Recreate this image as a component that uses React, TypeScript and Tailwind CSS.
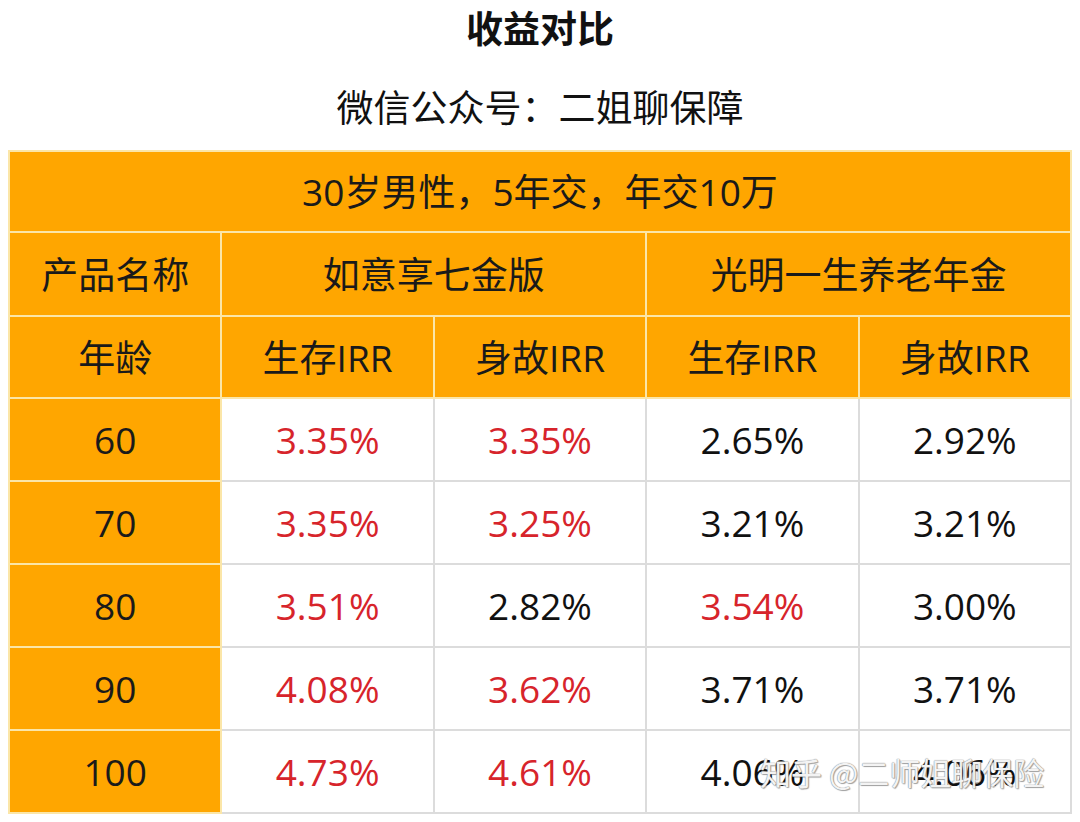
import React from "react";

const font = { fontFamily: '"Open Sans", "Noto Sans CJK SC", sans-serif' };

type Cell = { v: string; red?: boolean };

const rows: { age: string; cells: Cell[] }[] = [
  { age: "60", cells: [{ v: "3.35%", red: true }, { v: "3.35%", red: true }, { v: "2.65%" }, { v: "2.92%" }] },
  { age: "70", cells: [{ v: "3.35%", red: true }, { v: "3.25%", red: true }, { v: "3.21%" }, { v: "3.21%" }] },
  { age: "80", cells: [{ v: "3.51%", red: true }, { v: "2.82%" }, { v: "3.54%", red: true }, { v: "3.00%" }] },
  { age: "90", cells: [{ v: "4.08%", red: true }, { v: "3.62%", red: true }, { v: "3.71%" }, { v: "3.71%" }] },
  { age: "100", cells: [{ v: "4.73%", red: true }, { v: "4.61%", red: true }, { v: "4.06%" }, { v: "4.06%" }] },
];

const hd =
  "flex items-center justify-center bg-[#ffa600] text-[#1a1a1a] border-r-2 border-b-2 border-[#fbe6a8]";

export default function App() {
  return (
    <div className="w-[1080px] h-[822px] bg-white relative overflow-hidden" style={font}>
      <div className="h-[56px] flex items-center justify-center text-[37px] font-bold text-[#111] leading-none">
        收益对比
      </div>
      <div className="h-[94px] flex items-center justify-center text-[37px] text-[#111] leading-none pt-[8px]">
        微信公众号：二姐聊保障
      </div>
      <div className="mx-[8px] grid grid-cols-5 text-[37px] leading-none border-l-2 border-t-2 border-[#fbe6a8]">
        <div className={`${hd} col-span-5 h-[81px]`}>30岁男性，5年交，年交10万</div>
        <div className={`${hd} h-[84px]`}>产品名称</div>
        <div className={`${hd} col-span-2 h-[84px]`}>如意享七金版</div>
        <div className={`${hd} col-span-2 h-[84px]`}>光明一生养老年金</div>
        <div className={`${hd} h-[82px]`}>年龄</div>
        <div className={`${hd} h-[82px]`}>生存IRR</div>
        <div className={`${hd} h-[82px]`}>身故IRR</div>
        <div className={`${hd} h-[82px]`}>生存IRR</div>
        <div className={`${hd} h-[82px]`}>身故IRR</div>
        {rows.map((r) => (
          <React.Fragment key={r.age}>
            <div className={`${hd} h-[83px]`}>{r.age}</div>
            {r.cells.map((c, i) => (
              <div
                key={i}
                className={`flex items-center justify-center h-[83px] bg-white border-r-2 border-b-2 border-[#dcdcdc] ${
                  c.red ? "text-[#d7242b]" : "text-[#111]"
                }`}
              >
                {c.v}
              </div>
            ))}
          </React.Fragment>
        ))}
      </div>
      <div
        className="absolute left-[760px] top-[756px] text-[31px] leading-none text-white/90 whitespace-nowrap"
        style={{ fontFamily: '"Noto Sans CJK SC", sans-serif', textShadow: "0 0 1px #888, 0 0 1px #888, 1px 1px 1px rgba(0,0,0,0.35)" }}
      >
        知乎 @二师姐聊保险
      </div>
    </div>
  );
}
